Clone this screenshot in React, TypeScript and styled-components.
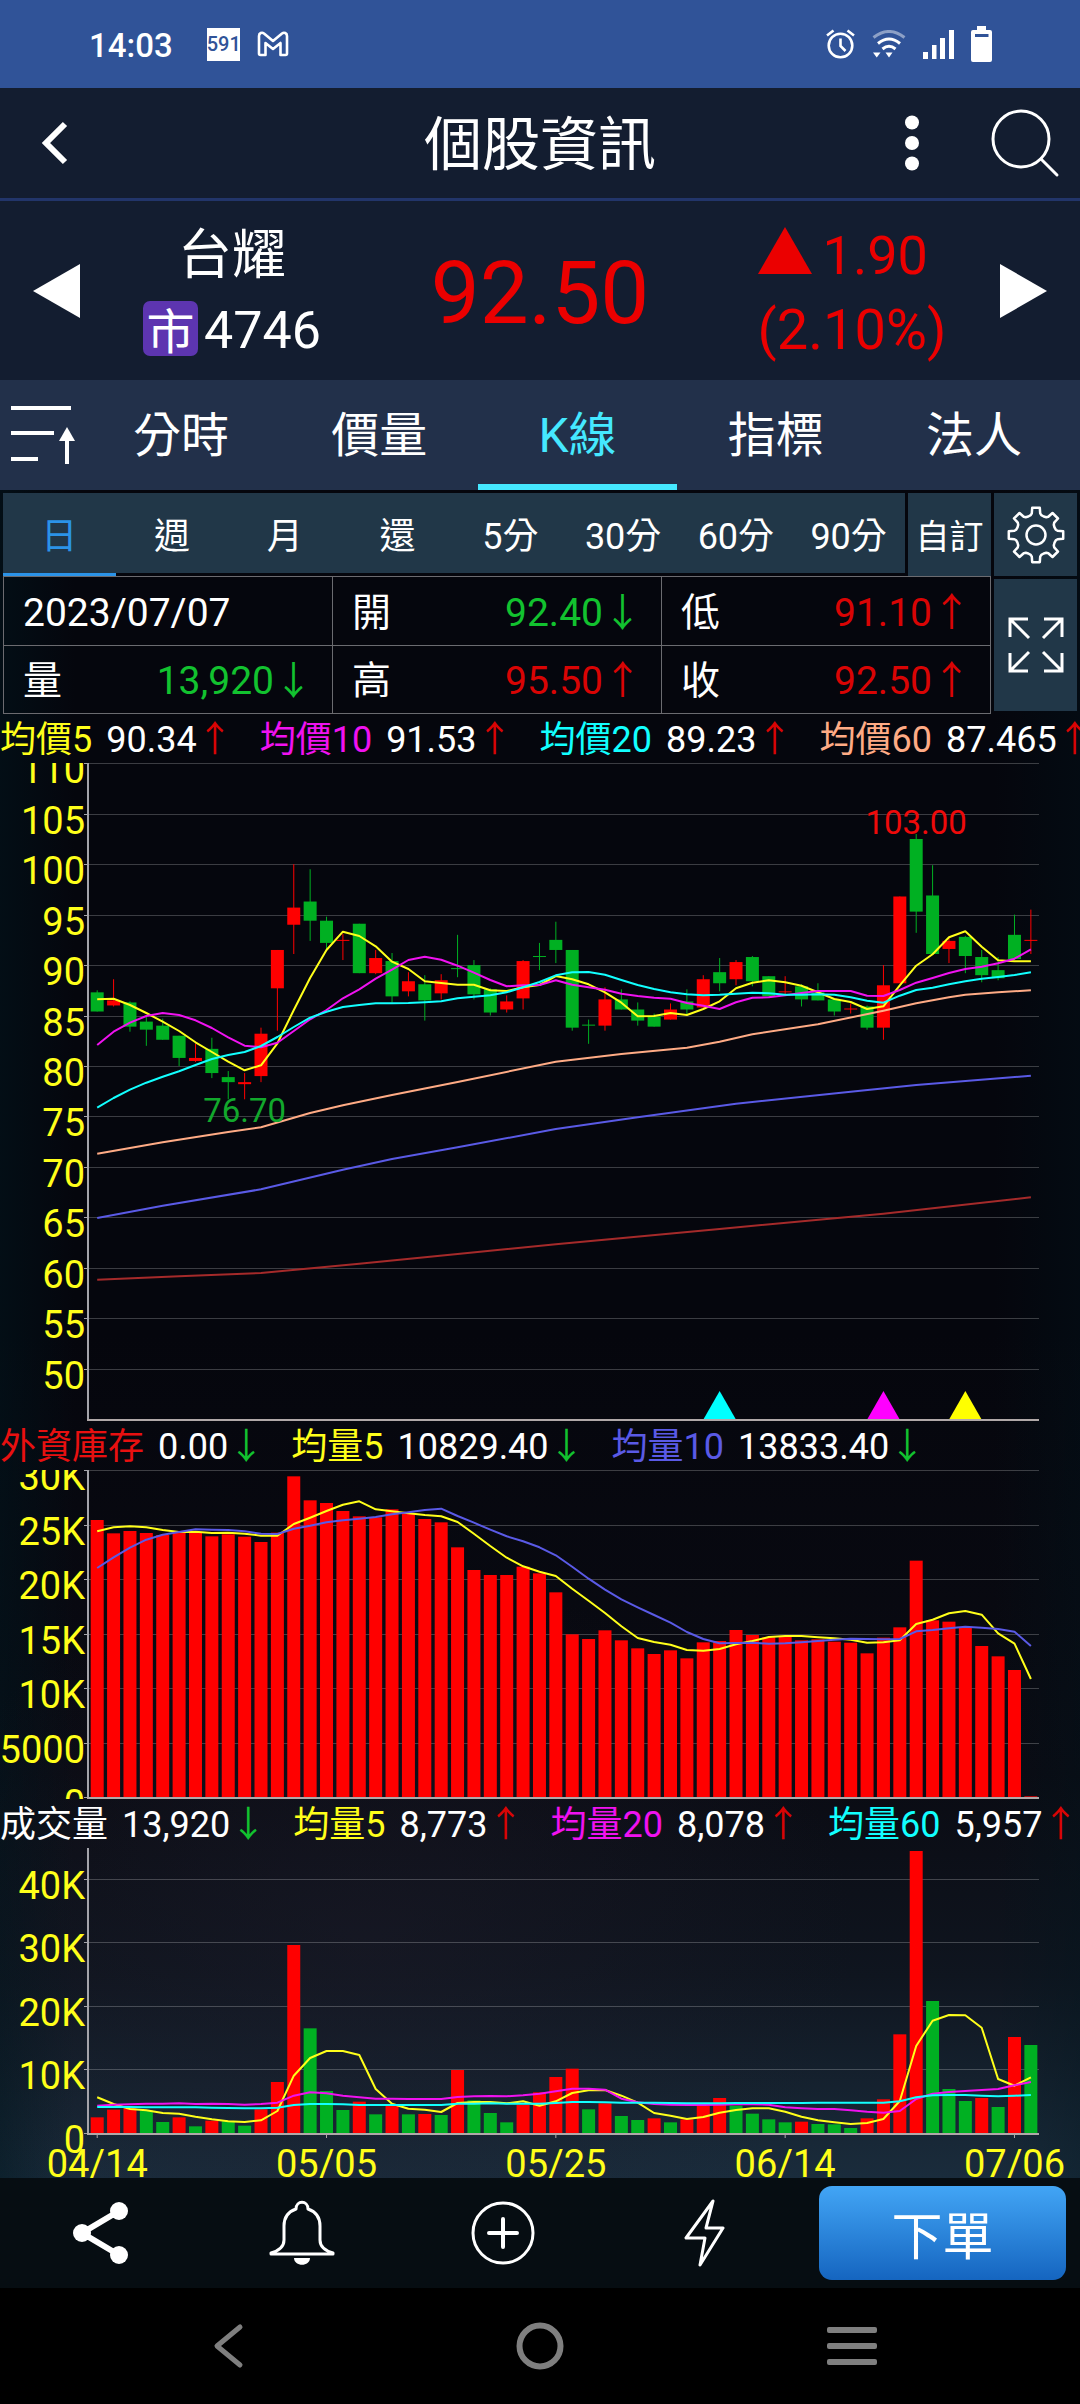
import React, { useState } from "react";
import styled, { createGlobalStyle } from "styled-components";

const UP = "#d90404";
const DOWN = "#12c22f";
const YELLOW = "#ffff1a";
const MAGENTA = "#f012f0";
const CYAN = "#12ffff";
const PEACH = "#ffab85";
const INDIGO = "#5a5ae6";
const BROWN = "#a52a2a";
const BAR_RED = "#ff0000";
const BAR_GREEN = "#00b022";

const GlobalStyle = createGlobalStyle`
  *, *::before, *::after { box-sizing: border-box; }
  body {
    margin: 0;
    background: #000;
    color: #fff;
    font-family: "Roboto", "Noto Sans CJK TC", sans-serif;
  }
  button {
    margin: 0;
    padding: 0;
    border: 0;
    background: none;
    color: inherit;
    font: inherit;
    cursor: pointer;
  }
  svg { display: block; }
`;

const Screen = styled.div`
  display: flex;
  flex-direction: column;
  width: 100%;
  overflow: hidden;
`;

/* ---------- status bar ---------- */

const StatusBar = styled.div`
  display: flex;
  align-items: center;
  justify-content: space-between;
  height: 88px;
  padding: 0 88px 0 89px;
  background: #305398;
`;

const StatusGroup = styled.div`
  display: flex;
  align-items: center;
  gap: 17px;
`;

const Clock = styled.span`
  padding: 2px 17px 0 0;
  font-size: 33px;
  font-weight: 500;
`;

const AppBadge = styled.span`
  width: 33px;
  height: 33px;
  background: #fff;
  color: #305398;
  font-size: 20px;
  font-weight: 500;
  line-height: 33px;
  text-align: center;
`;

/* ---------- header ---------- */

const Header = styled.header`
  display: grid;
  grid-template-columns: 1fr auto 1fr;
  align-items: center;
  height: 113px;
  padding: 0 16px 0 32px;
  border-bottom: 3px solid #22356a;
  background: #131d30;
`;

const Title = styled.h1`
  margin: 0;
  padding: 3px 16px 0 0;
  font-size: 58px;
  font-weight: 400;
  line-height: 80px;
`;

const HeaderActions = styled.div`
  display: flex;
  justify-content: flex-end;
  gap: 20px;
`;

/* ---------- quote ---------- */

const Quote = styled.section`
  display: grid;
  grid-template-columns: 113px 238px 1fr 238px 113px;
  align-items: center;
  justify-items: center;
  height: 179px;
  background: #131d30;
`;

const QuoteColumn = styled.div`
  display: grid;
  grid-auto-rows: 75px;
  align-items: center;
  justify-items: center;
  padding-top: 4px;
  font-size: 54px;
  line-height: 75px;
  white-space: nowrap;
`;

const ChangeColumn = styled(QuoteColumn)`
  justify-items: start;
  padding-left: 8px;
  color: #eb0000;
`;

const ChangeLine = styled.div`
  display: flex;
  align-items: center;
  gap: 11px;

  svg { margin-bottom: 9px; }
`;

const ChangePercent = styled.span`
  font-size: 56px;
`;

const CodeLine = styled.div`
  display: flex;
  align-items: center;
  gap: 6px;
  font-size: 52px;
`;

const MarketBadge = styled.span`
  width: 55px;
  height: 55px;
  margin-bottom: 4px;
  border-radius: 7px;
  background: #5d35b0;
  font-size: 48px;
  line-height: 64px;
  text-align: center;
`;

const Price = styled.strong`
  padding-top: 4px;
  color: #eb0000;
  font-size: 87px;
  font-weight: 400;
`;

/* ---------- tabs ---------- */

const TabBar = styled.nav`
  display: flex;
  height: 110px;
  padding-right: 7px;
  background: #22304a;
`;

const SortButton = styled.button`
  display: flex;
  align-items: center;
  flex: 0 0 82px;
  padding-left: 9px;
`;

const Tab = styled.button<{ $active: boolean }>`
  flex: 1;
  padding-bottom: 2px;
  border-bottom: 6px solid ${(p) => (p.$active ? "#45e8ff" : "transparent")};
  color: ${(p) => (p.$active ? "#45e8ff" : "#fff")};
  font-size: 48px;
`;

/* ---------- market area ---------- */

const Market = styled.main`
  background:
    radial-gradient(ellipse 45% 22% at 34% 86%, rgba(30, 28, 42, 0.45), transparent),
    linear-gradient(90deg, rgba(0, 22, 30, 0.5), transparent 7%, transparent 92%, rgba(0, 22, 30, 0.3)),
    linear-gradient(180deg, #05060d 0%, #05060d 50%, #0a0b13 76%, #0f151f 88%, #1a2c3c 100%);
`;

const Panel = styled.div`
  display: grid;
  grid-template-columns: 1fr 83px;
  grid-template-rows: 83px 135px;
  gap: 3px;
  padding: 3px 3px 0;
`;

const PeriodRow = styled.div`
  display: flex;
  gap: 3px;
`;

const Periods = styled.div`
  display: flex;
  flex: 1;
  height: 80px;
  background: #213748;
`;

const Period = styled.button<{ $active: boolean }>`
  flex: 1;
  height: 83px;
  border-bottom: 3px solid ${(p) => (p.$active ? "#2b93e8" : "transparent")};
  color: ${(p) => (p.$active ? "#2b93e8" : "#fff")};
  font-size: 36px;
  white-space: nowrap;
`;

const CustomButton = styled.button`
  flex: 0 0 83px;
  background: #213748;
  font-size: 34px;
`;

const ToolButton = styled.button<{ $short?: boolean }>`
  display: flex;
  align-items: center;
  justify-content: center;
  height: ${(p) => (p.$short ? "132px" : "100%")};
  background: #213748;
`;

const OhlcTable = styled.table`
  width: 100%;
  height: 138px;
  margin-top: -3px;
  border-collapse: collapse;
  table-layout: fixed;
  font-size: 39px;
  line-height: 62px;
`;

const OhlcCell = styled.td`
  padding: 4px 19px 0;
  border: 1px solid #6b6b70;
`;

const OhlcPair = styled.div`
  display: flex;
  justify-content: space-between;
`;

const Trend = styled.span<{ $up: boolean }>`
  color: ${(p) => (p.$up ? UP : DOWN)};
`;

/* ---------- legends & charts ---------- */

const Legend = styled.div`
  display: flex;
  gap: 27px;
  height: 49px;
  overflow: hidden;
  font-size: 36px;
  line-height: 52px;
  white-space: nowrap;
`;

const LegendItem = styled.span`
  display: flex;
  flex: none;
`;

const LegendName = styled.span<{ $color: string }>`
  margin-right: 14px;
  color: ${(p) => p.$color};
`;

const Chart = styled.svg`
  width: 100%;
  height: auto;
  overflow: hidden;
`;

const AxisText = styled.text`
  fill: ${YELLOW};
  font-size: 38px;
`;

const PeakText = styled.text`
  font-size: 33px;
  text-anchor: middle;
`;

/* ---------- bottom bars ---------- */

const Toolbar = styled.footer`
  display: flex;
  height: 110px;
  padding: 8px 14px 8px 0;
  background: #060d12;
`;

const ToolbarButton = styled.button`
  display: flex;
  align-items: center;
  justify-content: center;
  flex: 1;
`;

const OrderButton = styled.button`
  flex: 0 0 247px;
  height: 94px;
  margin-left: 15px;
  border-radius: 13px;
  background: linear-gradient(180deg, #42a5f5, #1565c0);
  font-size: 51px;
`;

const SystemNav = styled.nav`
  display: grid;
  grid-template-columns: repeat(3, 1fr);
  align-items: center;
  justify-items: center;
  height: 116px;
  padding: 0 72px;
  background: #000;
`;

/* ---------- data ---------- */

// body top, body bottom, high, low; "r" = rising, "g" = falling
type Candle = ["r" | "g", number, number, number, number];

const CANDLES: Candle[] = [
  ["g", 87.3, 85.4, 87.5, 85.4], ["r", 86.5, 86.0, 88.6, 85.9], ["g", 86.3, 83.9, 86.4, 83.4],
  ["g", 84.4, 83.6, 84.9, 82.0], ["g", 84.0, 82.6, 84.7, 82.6], ["g", 83.0, 80.8, 83.0, 80.0],
  ["r", 80.8, 80.5, 82.2, 80.4], ["g", 81.7, 79.3, 82.8, 78.8], ["g", 78.9, 78.4, 79.5, 76.7],
  ["r", 78.4, 78.2, 79.3, 76.7], ["r", 83.2, 79.0, 83.8, 78.4], ["r", 91.5, 87.7, 91.5, 83.5],
  ["r", 95.7, 94.0, 100, 91.1], ["g", 96.3, 94.4, 99.5, 92.4], ["g", 94.4, 92.2, 94.8, 91.5],
  ["r", 92.5, 92.5, 93.1, 90.5], ["g", 94.1, 89.2, 94.1, 89.2], ["r", 90.7, 89.2, 91.5, 89.1],
  ["g", 90.4, 86.9, 91.2, 86.3], ["r", 88.4, 87.4, 89.3, 86.9], ["g", 88.1, 86.5, 89.0, 84.5],
  ["r", 88.5, 87.2, 89.1, 86.6], ["g", 89.7, 89.7, 93.0, 88.8], ["g", 90.0, 87.1, 90.5, 86.6],
  ["g", 87.6, 85.3, 87.7, 85.0], ["r", 86.4, 85.6, 87.0, 85.3], ["r", 90.4, 86.7, 90.5, 85.6],
  ["g", 90.9, 90.8, 92.2, 89.5], ["g", 92.5, 91.5, 94.3, 90.2], ["g", 91.5, 83.8, 91.5, 83.5],
  ["g", 84.1, 84.0, 84.6, 82.2], ["r", 86.6, 84.0, 87.8, 83.5], ["g", 86.6, 85.6, 87.6, 85.6],
  ["g", 85.6, 84.5, 86.3, 84.0], ["g", 84.9, 83.9, 85.2, 83.9], ["r", 85.6, 84.6, 86.2, 84.6],
  ["g", 86.4, 85.6, 87.6, 85.0], ["r", 88.6, 85.8, 89.0, 85.8], ["g", 89.3, 88.2, 90.7, 87.4],
  ["r", 90.3, 88.6, 90.5, 88.0], ["g", 90.8, 88.4, 90.9, 87.9], ["g", 88.9, 86.9, 88.9, 86.9],
  ["r", 87.4, 87.4, 88.9, 87.0], ["g", 87.9, 86.6, 88.1, 85.9], ["g", 87.3, 86.5, 88.2, 86.5],
  ["g", 86.6, 85.4, 86.7, 85.0], ["r", 85.7, 85.6, 86.2, 85.2], ["g", 85.9, 83.8, 86.0, 83.6],
  ["r", 88.0, 83.8, 90.0, 82.6], ["r", 96.8, 88.2, 96.8, 88.2], ["g", 102.5, 95.3, 103, 93.2],
  ["g", 96.9, 91.1, 99.9, 91.1], ["r", 92.4, 91.6, 92.8, 90.2], ["g", 92.8, 90.9, 92.9, 89.2],
  ["g", 90.8, 89.0, 91.5, 88.3], ["g", 89.5, 88.7, 90.8, 88.5], ["g", 93.0, 90.6, 95.0, 90.5],
  ["r", 92.5, 92.4, 95.5, 91.1],
];

// Curves are sampled at three steps per chart unit, measured down from the chart's datum.
const PRICE_MA5 = [718, 716, 735, 759, 785, 813, 847, 876, 905, 931, 916, 850, 750, 654, 570, 515, 528, 559, 605, 627, 664, 669, 674, 674, 691, 693, 682, 675, 648, 658, 673, 697, 728, 769, 768, 759, 765, 747, 724, 685, 668, 661, 667, 677, 697, 717, 726, 747, 739, 676, 617, 583, 532, 514, 560, 601, 604, 604];
const PRICE_MA10 = [855, 815, 788, 768, 759, 765, 781, 804, 832, 857, 862, 848, 813, 778, 750, 715, 688, 656, 629, 600, 590, 599, 617, 638, 660, 679, 676, 675, 661, 674, 682, 689, 701, 708, 713, 716, 729, 737, 747, 727, 713, 712, 706, 699, 693, 693, 693, 707, 708, 690, 668, 654, 639, 627, 620, 610, 596, 568];
const PRICE_MA20 = [1043, 1014, 989, 968, 950, 934, 915, 897, 885, 876, 858, 831, 801, 773, 755, 741, 735, 730, 730, 729, 727, 724, 715, 710, 706, 697, 682, 666, 646, 637, 636, 644, 660, 675, 687, 697, 703, 706, 704, 701, 698, 700, 704, 704, 703, 704, 712, 722, 728, 707, 690, 683, 673, 664, 656, 651, 645, 637];
const PRICE_MA60: [number, number][] = [[0, 1181], [4, 1147], [8, 1116], [10, 1102], [12, 1073], [13, 1059], [15, 1036], [18, 1005], [22, 966], [28, 905], [32, 882], [36, 863], [38, 845], [40, 823], [44, 793], [48, 752], [50, 730], [52, 712], [53, 704], [55, 697], [57, 691]];
const PRICE_MA120: [number, number][] = [[0, 1374], [4, 1337], [10, 1288], [15, 1229], [18, 1197], [22, 1162], [28, 1107], [33, 1072], [39, 1031], [46, 995], [50, 975], [57, 947]];
const PRICE_MA240: [number, number][] = [[0, 1559], [5, 1549], [10, 1539], [16, 1511], [22, 1482], [28, 1453], [38, 1407], [48, 1361], [57, 1312]];

const HOLDING_TOPS = [240, 280, 273, 279, 285, 275, 277, 289, 283, 290, 306, 278, 109, 181, 189, 213, 229, 232, 208, 222, 237, 247, 322, 390, 405, 405, 380, 400, 457, 583, 597, 571, 601, 625, 642, 631, 655, 607, 603, 570, 585, 592, 591, 601, 598, 605, 608, 640, 593, 562, 362, 541, 545, 564, 618, 649, 690, 1069];
const HOLDING_MA5 = [274, 262, 259, 262, 270, 276, 275, 279, 278, 281, 287, 287, 252, 233, 213, 194, 184, 208, 214, 220, 225, 229, 246, 281, 318, 353, 379, 395, 408, 446, 482, 519, 559, 594, 606, 614, 630, 632, 627, 613, 603, 591, 588, 588, 592, 595, 599, 608, 607, 601, 552, 539, 520, 513, 524, 580, 611, 717];
const HOLDING_MA10 = [384, 352, 323, 299, 284, 276, 268, 269, 270, 274, 281, 282, 266, 257, 247, 241, 236, 231, 223, 217, 210, 206, 228, 248, 269, 289, 304, 322, 346, 380, 416, 449, 478, 502, 525, 548, 576, 597, 610, 609, 608, 611, 610, 607, 603, 599, 596, 597, 598, 597, 574, 570, 565, 560, 563, 567, 575, 618];

const VOLUME_TOPS = [982, 959, 955, 962, 996, 982, 1009, 992, 994, 1007, 958, 876, 465, 715, 903, 960, 935, 973, 948, 973, 972, 975, 840, 931, 969, 997, 945, 907, 861, 836, 958, 940, 978, 990, 985, 997, 988, 948, 924, 947, 971, 988, 997, 995, 1002, 1003, 1014, 985, 928, 733, 183, 633, 897, 933, 924, 951, 741, 765];
const VOLUME_SIGNS = "rrrggrgrggrrrgggrgrgrgrgggrrrrgrggrgrrrggggrgggrrrrgggrgrg";
const VOLUME_MA5 = [922, 942, 957, 961, 969, 971, 980, 988, 994, 996, 991, 963, 857, 804, 783, 783, 795, 897, 941, 956, 959, 966, 939, 936, 936, 940, 934, 947, 934, 909, 901, 900, 917, 938, 969, 977, 987, 981, 968, 960, 955, 955, 965, 980, 991, 997, 1002, 999, 987, 933, 768, 692, 675, 676, 713, 867, 887, 862];
const VOLUME_MA20 = [947, 944, 943, 941, 941, 940, 942, 941, 942, 944, 942, 938, 917, 907, 910, 917, 922, 926, 926, 927, 927, 927, 921, 919, 918, 919, 916, 911, 904, 896, 896, 899, 926, 937, 942, 944, 945, 945, 944, 943, 943, 944, 952, 955, 957, 957, 961, 965, 968, 963, 927, 911, 906, 903, 900, 897, 886, 876];
const VOLUME_MA60 = [951, 951, 951, 952, 952, 952, 952, 953, 954, 955, 955, 953, 945, 942, 942, 943, 945, 945, 945, 945, 945, 945, 941, 941, 940, 941, 941, 941, 939, 936, 936, 937, 938, 938, 938, 939, 940, 940, 940, 939, 939, 939, 939, 939, 938, 938, 938, 938, 938, 934, 922, 916, 915, 915, 917, 919, 917, 915];

/* ---------- chart helpers ---------- */

const AXIS_X = 88;
const PLOT_RIGHT = 1039;
const BAR_WIDTH = 13;
const xAt = (i: number) => 97.2 + i * 16.38;

const sparse = (values: [number, number][], datum: number) =>
  values.map(([i, v]) => `${xAt(i).toFixed(1)},${(v / 3 - datum).toFixed(1)}`).join(" ");
const dense = (values: number[], datum: number) =>
  sparse(values.map((v, i): [number, number] => [i, v]), datum);

function Curve({ points, color }: { points: string; color: string }) {
  return <polyline points={points} fill="none" stroke={color} strokeWidth={2} strokeLinejoin="round" />;
}

interface GridProps {
  rows: { label: string; y: number }[];
  bottom: number;
}

function AxisLabels({ rows }: Pick<GridProps, "rows">) {
  return (
    <>
      {rows.map((row) => (
        <AxisText key={row.label} x={85} y={row.y + 19} textAnchor="end">
          {row.label}
        </AxisText>
      ))}
    </>
  );
}

function Grid({ rows, bottom }: GridProps) {
  return (
    <>
      {rows.map((row) => (
        <g key={row.label}>
          <line x1={AXIS_X} x2={PLOT_RIGHT} y1={row.y} y2={row.y} stroke="rgba(255,255,255,0.22)" strokeWidth={1} />
          <line x1={84} x2={AXIS_X} y1={row.y} y2={row.y} stroke="#a4a4aa" strokeWidth={1} />
        </g>
      ))}
      <line x1={AXIS_X} x2={AXIS_X} y1={0} y2={bottom} stroke="#a4a4aa" strokeWidth={2} />
    </>
  );
}

function BaseLine({ y }: { y: number }) {
  return <line x1={AXIS_X - 1} x2={PLOT_RIGHT} y1={y} y2={y} stroke="#b0a8a8" strokeWidth={2} />;
}

function PriceChart() {
  const yOf = (price: number) => 0.3 + (110 - price) * 10.09;
  const rows = [110, 105, 100, 95, 90, 85, 80, 75, 70, 65, 60, 55, 50].map((p) => ({
    label: String(p),
    y: Math.round(yOf(p)) + 0.5,
  }));
  const markers: [number, string][] = [[38, "#00ffff"], [48, "#ff00ff"], [53, "#ffff00"]];
  return (
    <Chart viewBox="0 0 1080 658" role="img" aria-label="K線圖">
      <AxisLabels rows={rows} />
      <Grid rows={rows} bottom={657} />
      {CANDLES.map(([sign, top, bottom, high, low], i) => (
        <g key={i} fill={sign === "r" ? BAR_RED : BAR_GREEN}>
          <rect x={xAt(i) - 0.5} y={yOf(high)} width={1} height={yOf(low) - yOf(high)} />
          <rect
            x={xAt(i) - BAR_WIDTH / 2}
            y={yOf(top)}
            width={BAR_WIDTH}
            height={Math.max(1, yOf(bottom) - yOf(top))}
          />
        </g>
      ))}
      <Curve points={sparse(PRICE_MA240, 3)} color={BROWN} />
      <Curve points={sparse(PRICE_MA120, 3)} color={INDIGO} />
      <Curve points={sparse(PRICE_MA60, 3)} color={PEACH} />
      <Curve points={dense(PRICE_MA5, 3)} color={YELLOW} />
      <Curve points={dense(PRICE_MA10, 3)} color={MAGENTA} />
      <Curve points={dense(PRICE_MA20, 3)} color={CYAN} />
      <PeakText x={xAt(50)} y={71} fill="#ee0a0a">103.00</PeakText>
      <PeakText x={xAt(9)} y={359} fill="#12a82c">76.70</PeakText>
      {markers.map(([i, color]) => (
        <polygon key={i} points={`${xAt(i) - 16},656 ${xAt(i)},628 ${xAt(i) + 16},656`} fill={color} />
      ))}
      <BaseLine y={657} />
    </Chart>
  );
}

function HoldingChart() {
  const rows = ["30K", "25K", "20K", "15K", "10K", "5000", "0"].map((label, i) => ({
    label,
    y: Math.round(i * 54.5) + 0.5,
  }));
  return (
    <Chart viewBox="0 0 1080 329" role="img" aria-label="外資庫存">
      <AxisLabels rows={rows} />
      <Grid rows={rows} bottom={328} />
      {HOLDING_TOPS.map((top, i) => (
        <rect
          key={i}
          x={xAt(i) - BAR_WIDTH / 2}
          y={top / 3 - 30}
          width={BAR_WIDTH}
          height={357 - top / 3}
          fill={BAR_RED}
        />
      ))}
      <Curve points={dense(HOLDING_MA5, 30)} color={YELLOW} />
      <Curve points={dense(HOLDING_MA10, 30)} color={INDIGO} />
      <BaseLine y={328} />
    </Chart>
  );
}

function VolumeChart() {
  const rows = ["40K", "30K", "20K", "10K", "0"].map((label, i) => ({
    label,
    y: Math.round(31 + i * 63.4) + 0.5,
  }));
  const dates: [number, string][] = [[0, "04/14"], [14, "05/05"], [28, "05/25"], [42, "06/14"], [56, "07/06"]];
  return (
    <Chart viewBox="0 0 1080 330" role="img" aria-label="成交量">
      <AxisLabels rows={rows} />
      <Grid rows={rows} bottom={286} />
      {VOLUME_TOPS.map((top, i) => (
        <rect
          key={i}
          x={xAt(i) - BAR_WIDTH / 2}
          y={top / 3 - 58}
          width={BAR_WIDTH}
          height={343 - top / 3}
          fill={VOLUME_SIGNS[i] === "r" ? BAR_RED : BAR_GREEN}
        />
      ))}
      <Curve points={dense(VOLUME_MA5, 58)} color={YELLOW} />
      <Curve points={dense(VOLUME_MA20, 58)} color={MAGENTA} />
      <Curve points={dense(VOLUME_MA60, 58)} color={CYAN} />
      <BaseLine y={286} />
      {dates.map(([i, label]) => (
        <g key={label}>
          <line x1={xAt(i)} x2={xAt(i)} y1={286} y2={290} stroke="#b0a8a8" strokeWidth={1} />
          <AxisText x={xAt(i)} y={329} textAnchor="middle">{label}</AxisText>
        </g>
      ))}
    </Chart>
  );
}

interface Reading {
  name: string;
  value: string;
  color: string;
  up: boolean;
}

function LegendRow({ items }: { items: Reading[] }) {
  return (
    <Legend>
      {items.map((item) => (
        <LegendItem key={item.name}>
          <LegendName $color={item.color}>{item.name}</LegendName>
          <span>{item.value}</span>
          <Trend $up={item.up}>{item.up ? "↑" : "↓"}</Trend>
        </LegendItem>
      ))}
    </Legend>
  );
}

/* ---------- icons ---------- */

function GmailIcon() {
  return (
    <svg width="32" height="26" viewBox="0 0 32 26" fill="none" stroke="#fff" strokeWidth="2.6" strokeLinejoin="round">
      <path d="M2 5v17.500q0 1.500 1.500 1.500h5V12l7.500 6 7.500-6v12h5q1.500 0 1.500-1.500V5c0-3-3-4-5-2.500L16 10 7 2.500C5 1 2 2 2 5z" />
    </svg>
  );
}

function AlarmIcon() {
  return (
    <svg width="29" height="30" viewBox="0 0 29 30" fill="none" stroke="#fff" strokeWidth="2.6">
      <circle cx="14.5" cy="16.5" r="11.8" />
      <path d="M14.5 9.5v7.500l5 5M1 6.500l6.500-5M28 6.500l-6.500-5" />
    </svg>
  );
}

function WifiIcon() {
  return (
    <svg width="34" height="29" viewBox="0 0 34 29" fill="none" stroke="#fff" strokeWidth="3">
      <path d="M1.500 7.500Q17-4.500 32.500 7.500" opacity="0.45" />
      <path d="M6 13.500Q17 4.500 28 13.500" />
      <path d="M10.500 19q6.500-5.500 13 0" />
      <path d="M1 22.500h7.500l-3.750 5zM13.500 22.500h7l-3.500 5z" fill="#fff" stroke="none" />
    </svg>
  );
}

function SignalIcon() {
  return (
    <svg width="31" height="29" viewBox="0 0 31 29" fill="#fff">
      <path d="M0 22h5v7H0zM9 15h4.500v14H9zM17 8h5v21h-5zM26 0h5v29h-5z" />
    </svg>
  );
}

function BatteryIcon() {
  return (
    <svg width="21" height="36" viewBox="0 0 21 36">
      <path d="M6 0h9v4h4q2 0 2 2v28q0 2-2 2H2q-2 0-2-2V6q0-2 2-2h4z" fill="#fff" />
      <path d="M4 8h13.500v3H4z" fill="#305398" />
    </svg>
  );
}

function GearIcon() {
  const points: string[] = [];
  const profile: [number, number][] = [[-15, 20.5], [-11, 22], [-8, 27.5], [8, 27.5], [11, 22], [15, 20.5], [22.5, 20]];
  for (let tooth = 0; tooth < 8; tooth += 1) {
    profile.forEach(([angle, radius]) => {
      const a = ((tooth * 45 + angle - 90) * Math.PI) / 180;
      points.push(`${(29 + radius * Math.cos(a)).toFixed(1)},${(29 + radius * Math.sin(a)).toFixed(1)}`);
    });
  }
  return (
    <svg width="58" height="58" viewBox="0 0 58 58" fill="none" stroke="#fff" strokeWidth="2.5" strokeLinejoin="round">
      <polygon points={points.join(" ")} />
      <circle cx="29" cy="29" r="9.5" />
    </svg>
  );
}

/* ---------- screen ---------- */

const TABS = ["分時", "價量", "K線", "指標", "法人"];
const PERIODS = ["日", "週", "月", "還", "5分", "30分", "60分", "90分"];

function OhlcValue({ label, value, up }: { label: string; value: string; up: boolean }) {
  return (
    <OhlcCell>
      <OhlcPair>
        <span>{label}</span>
        <Trend $up={up}>{value}{up ? "↑" : "↓"}</Trend>
      </OhlcPair>
    </OhlcCell>
  );
}

export default function App() {
  const [tab, setTab] = useState("K線");
  const [period, setPeriod] = useState("日");

  return (
    <Screen>
      <GlobalStyle />
      <StatusBar>
        <StatusGroup>
          <Clock>14:03</Clock>
          <AppBadge>591</AppBadge>
          <GmailIcon />
        </StatusGroup>
        <StatusGroup>
          <AlarmIcon />
          <WifiIcon />
          <SignalIcon />
          <BatteryIcon />
        </StatusGroup>
      </StatusBar>

      <Header>
        <button aria-label="返回">
          <svg width="44" height="54" viewBox="0 0 44 54" fill="none" stroke="#fff" strokeWidth="6">
            <path d="M33 8L14 27l19 19" />
          </svg>
        </button>
        <Title>個股資訊</Title>
        <HeaderActions>
          <button aria-label="更多">
            <svg width="60" height="80" viewBox="0 0 60 80" fill="#fff">
              <circle cx="18" cy="19.5" r="7" />
              <circle cx="18" cy="40" r="7" />
              <circle cx="18" cy="60.5" r="7" />
            </svg>
          </button>
          <button aria-label="搜尋">
            <svg width="90" height="80" viewBox="0 0 90 80" fill="none" stroke="#fff" strokeWidth="3" strokeLinecap="round">
              <circle cx="47" cy="36" r="28" />
              <path d="M67 56l16 16" />
            </svg>
          </button>
        </HeaderActions>
      </Header>

      <Quote>
        <button aria-label="上一檔">
          <svg width="47" height="54" viewBox="0 0 47 54" fill="#fff"><path d="M47 0v54L0 27z" /></svg>
        </button>
        <QuoteColumn>
          <span>台耀</span>
          <CodeLine>
            <MarketBadge>市</MarketBadge>
            <span>4746</span>
          </CodeLine>
        </QuoteColumn>
        <Price>92.50</Price>
        <ChangeColumn>
          <ChangeLine>
            <svg width="54" height="47" viewBox="0 0 54 47" fill="#eb0000"><path d="M27 0l27 47H0z" /></svg>
            <span>1.90</span>
          </ChangeLine>
          <ChangePercent>(2.10%)</ChangePercent>
        </ChangeColumn>
        <button aria-label="下一檔">
          <svg width="47" height="54" viewBox="0 0 47 54" fill="#fff"><path d="M0 0v54l47-27z" /></svg>
        </button>
      </Quote>

      <TabBar>
        <SortButton aria-label="排序">
          <svg width="68" height="60" viewBox="0 0 68 60" fill="none" stroke="#fff" strokeWidth="4">
            <path d="M2 3h60M2 28h43M2 54h27M58 34v25" />
            <path d="M58 22l8 14H50z" fill="#fff" stroke="none" />
          </svg>
        </SortButton>
        {TABS.map((name) => (
          <Tab key={name} $active={name === tab} onClick={() => setTab(name)}>{name}</Tab>
        ))}
      </TabBar>

      <Market>
        <Panel>
          <PeriodRow>
            <Periods>
              {PERIODS.map((name) => (
                <Period key={name} $active={name === period} onClick={() => setPeriod(name)}>{name}</Period>
              ))}
            </Periods>
            <CustomButton>自訂</CustomButton>
          </PeriodRow>
          <ToolButton aria-label="設定"><GearIcon /></ToolButton>
          <OhlcTable>
            <tbody>
              <tr>
                <OhlcCell>2023/07/07</OhlcCell>
                <OhlcValue label="開" value="92.40" up={false} />
                <OhlcValue label="低" value="91.10" up />
              </tr>
              <tr>
                <OhlcValue label="量" value="13,920" up={false} />
                <OhlcValue label="高" value="95.50" up />
                <OhlcValue label="收" value="92.50" up />
              </tr>
            </tbody>
          </OhlcTable>
          <ToolButton $short aria-label="全螢幕">
            <svg width="56" height="56" viewBox="0 0 56 56" fill="none" stroke="#fff" strokeWidth="3">
              <path d="M2 20V2h18M2 2l19 19M36 2h18v18M54 2L35 21M2 36v18h18M2 54l19-19M36 54h18V36M54 54L35 35" />
            </svg>
          </ToolButton>
        </Panel>

        <LegendRow
          items={[
            { name: "均價5", value: "90.34", color: YELLOW, up: true },
            { name: "均價10", value: "91.53", color: MAGENTA, up: true },
            { name: "均價20", value: "89.23", color: CYAN, up: true },
            { name: "均價60", value: "87.465", color: PEACH, up: true },
          ]}
        />
        <PriceChart />
        <LegendRow
          items={[
            { name: "外資庫存", value: "0.00", color: "#e81010", up: false },
            { name: "均量5", value: "10829.40", color: YELLOW, up: false },
            { name: "均量10", value: "13833.40", color: INDIGO, up: false },
          ]}
        />
        <HoldingChart />
        <LegendRow
          items={[
            { name: "成交量", value: "13,920", color: "#fff", up: false },
            { name: "均量5", value: "8,773", color: YELLOW, up: true },
            { name: "均量20", value: "8,078", color: MAGENTA, up: true },
            { name: "均量60", value: "5,957", color: CYAN, up: true },
          ]}
        />
        <VolumeChart />
      </Market>

      <Toolbar>
        <ToolbarButton aria-label="分享">
          <svg width="56" height="62" viewBox="0 0 56 62" fill="#fff">
            <path d="M46 9L9 31l37 22" fill="none" stroke="#fff" strokeWidth="6" />
            <circle cx="46" cy="9" r="9" />
            <circle cx="9" cy="31" r="9" />
            <circle cx="46" cy="53" r="9" />
          </svg>
        </ToolbarButton>
        <ToolbarButton aria-label="通知">
          <svg width="66" height="66" viewBox="0 0 66 66" fill="none" stroke="#fff" strokeWidth="3" strokeLinejoin="round">
            <path d="M27 9c0-9 12-9 12 0 9 3 12 9 12 17v14c0 7 6 11 13 13v1H2v-1c7-2 13-6 13-13V26c0-8 3-14 12-17z" />
            <path d="M25 58h16c0 9-16 9-16 0z" fill="#fff" stroke="none" />
          </svg>
        </ToolbarButton>
        <ToolbarButton aria-label="加入">
          <svg width="64" height="64" viewBox="0 0 64 64" fill="none" stroke="#fff" strokeWidth="3" strokeLinecap="round">
            <circle cx="32" cy="32" r="30" />
            <path d="M32 18v28M18 32h28" strokeWidth="4" />
          </svg>
        </ToolbarButton>
        <ToolbarButton aria-label="閃電下單">
          <svg width="42" height="68" viewBox="0 0 42 68" fill="none" stroke="#fff" strokeWidth="3" strokeLinejoin="round">
            <path d="M30 2L3 39h19l-5 27L40 29H23z" />
          </svg>
        </ToolbarButton>
        <OrderButton>下單</OrderButton>
      </Toolbar>

      <SystemNav>
        <button aria-label="系統返回">
          <svg width="36" height="48" viewBox="0 0 36 48" fill="none" stroke="#7f7f7f" strokeWidth="5" strokeLinecap="round" strokeLinejoin="round">
            <path d="M30 5L7 24l23 19" />
          </svg>
        </button>
        <button aria-label="主畫面">
          <svg width="48" height="48" viewBox="0 0 48 48" fill="none" stroke="#7f7f7f" strokeWidth="6">
            <circle cx="24" cy="24" r="20.5" />
          </svg>
        </button>
        <button aria-label="最近使用">
          <svg width="50" height="38" viewBox="0 0 50 38" fill="#7f7f7f">
            <rect width="50" height="6" rx="2" />
            <rect y="16" width="50" height="6" rx="2" />
            <rect y="32" width="50" height="6" rx="2" />
          </svg>
        </button>
      </SystemNav>
    </Screen>
  );
}
